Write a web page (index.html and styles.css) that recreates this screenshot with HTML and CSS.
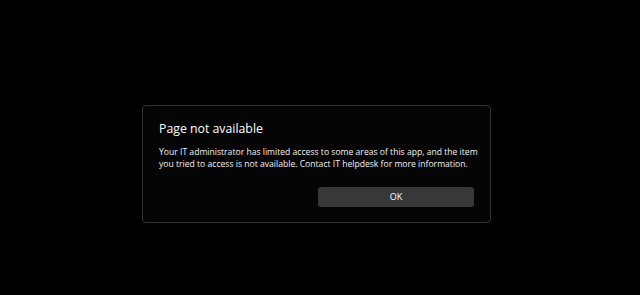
FILE: index.html
```html
<!DOCTYPE html>
<html>

<head>
    <meta charset="UTF-8">
    <meta name="viewport" content="width=device-width, initial-scale=1.0">
    <link rel="stylesheet" href="styles.css">
    <title>Page not available</title>
</head>

<body>
    <div id="container">
        <div class="dialog">
            <h2 class="title">Page not available</h2>
            <p class="message">Your IT administrator has limited access to some areas of this app, and the item<br>
                you tried to access is not available. Contact IT helpdesk for more information.</p>
            <div class="actions">
                <a class="button" href="#">OK</a>
            </div>
        </div>
    </div>
</body>

</html>
```

FILE: styles.css
```css
html,
body {
    width: 100%;
    height: 100%;
    margin: 0;
    padding: 0;
    background-color: #000;
    font-family: "Open Sans", "Noto Sans", sans-serif;
    color: #fff;
}

#container {
    display: flex;
    padding: 105px 0 0 142px;
}

.dialog {
    box-sizing: border-box;
    width: 349px;
    height: 118px;
    padding: 14px 16px 15px 16px;
    background-color: #050505;
    border: 1px solid #333;
    border-radius: 4px;
    display: flex;
    flex-direction: column;
}

.title {
    margin: 0;
    font-size: 12.3px;
    font-weight: normal;
    line-height: 18px;
}

.message {
    margin: 8px 0 0 0;
    font-size: 8.6px;
    line-height: 12px;
    color: #f2f2f2;
    white-space: nowrap;
}

.actions {
    margin-top: auto;
    display: flex;
    justify-content: flex-end;
}

.button {
    width: 156px;
    height: 20px;
    line-height: 20px;
    text-align: center;
    font-size: 9px;
    background-color: #383838;
    border-radius: 3px;
    color: #fff;
    text-decoration: none;
}
```
